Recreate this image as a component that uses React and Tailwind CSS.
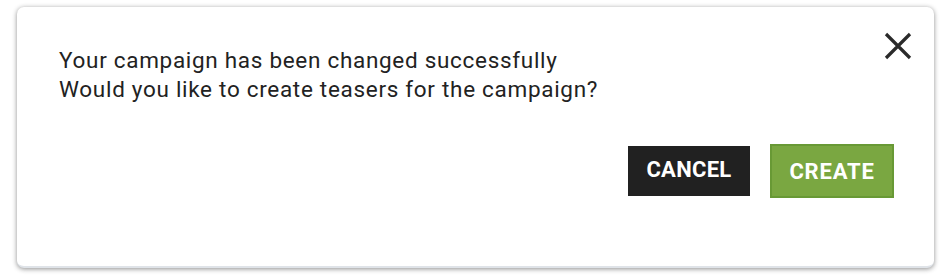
import React from 'react';

const App = () => (
    <div className="w-[942px] h-[280px] bg-white pt-[7px] pl-[17px]" style={{ fontFamily: 'Roboto, "Liberation Sans", sans-serif' }}>
        <div className="relative w-[917px] h-[261px] bg-white rounded-[7px] border-b-2 border-[#dfe3e8] shadow-[0_1px_5px_rgba(0,0,0,0.45)] px-[42px] pt-[39px]">
            <button className="absolute right-[21px] top-[24px] w-[30px] h-[30px] flex items-center justify-center text-[#2a2a2a]">
                <svg width="30" height="30" viewBox="0 0 30 30" fill="none" stroke="currentColor" strokeWidth="3.2">
                    <path d="M3 3 L27 27 M27 3 L3 27" />
                </svg>
            </button>
            <p className="text-[22.5px] leading-[29px] tracking-[0.7px] text-[#222]">Your campaign has been changed successfully</p>
            <p className="text-[22.5px] leading-[29px] tracking-[0.7px] text-[#222]">Would you like to create teasers for the campaign?</p>
            <div className="flex justify-end items-center gap-[20px] mt-[40px] mr-[-2px]">
                <button className="w-[122px] h-[50px] pb-[4px] bg-[#212121] text-white text-[22px] font-bold uppercase tracking-[0.3px]">Cancel</button>
                <button className="w-[124px] h-[54px] bg-[#7aa741] border-2 border-[#689935] text-white text-[22px] font-bold uppercase tracking-[0.8px]">Create</button>
            </div>
        </div>
    </div>
);

export default App;
